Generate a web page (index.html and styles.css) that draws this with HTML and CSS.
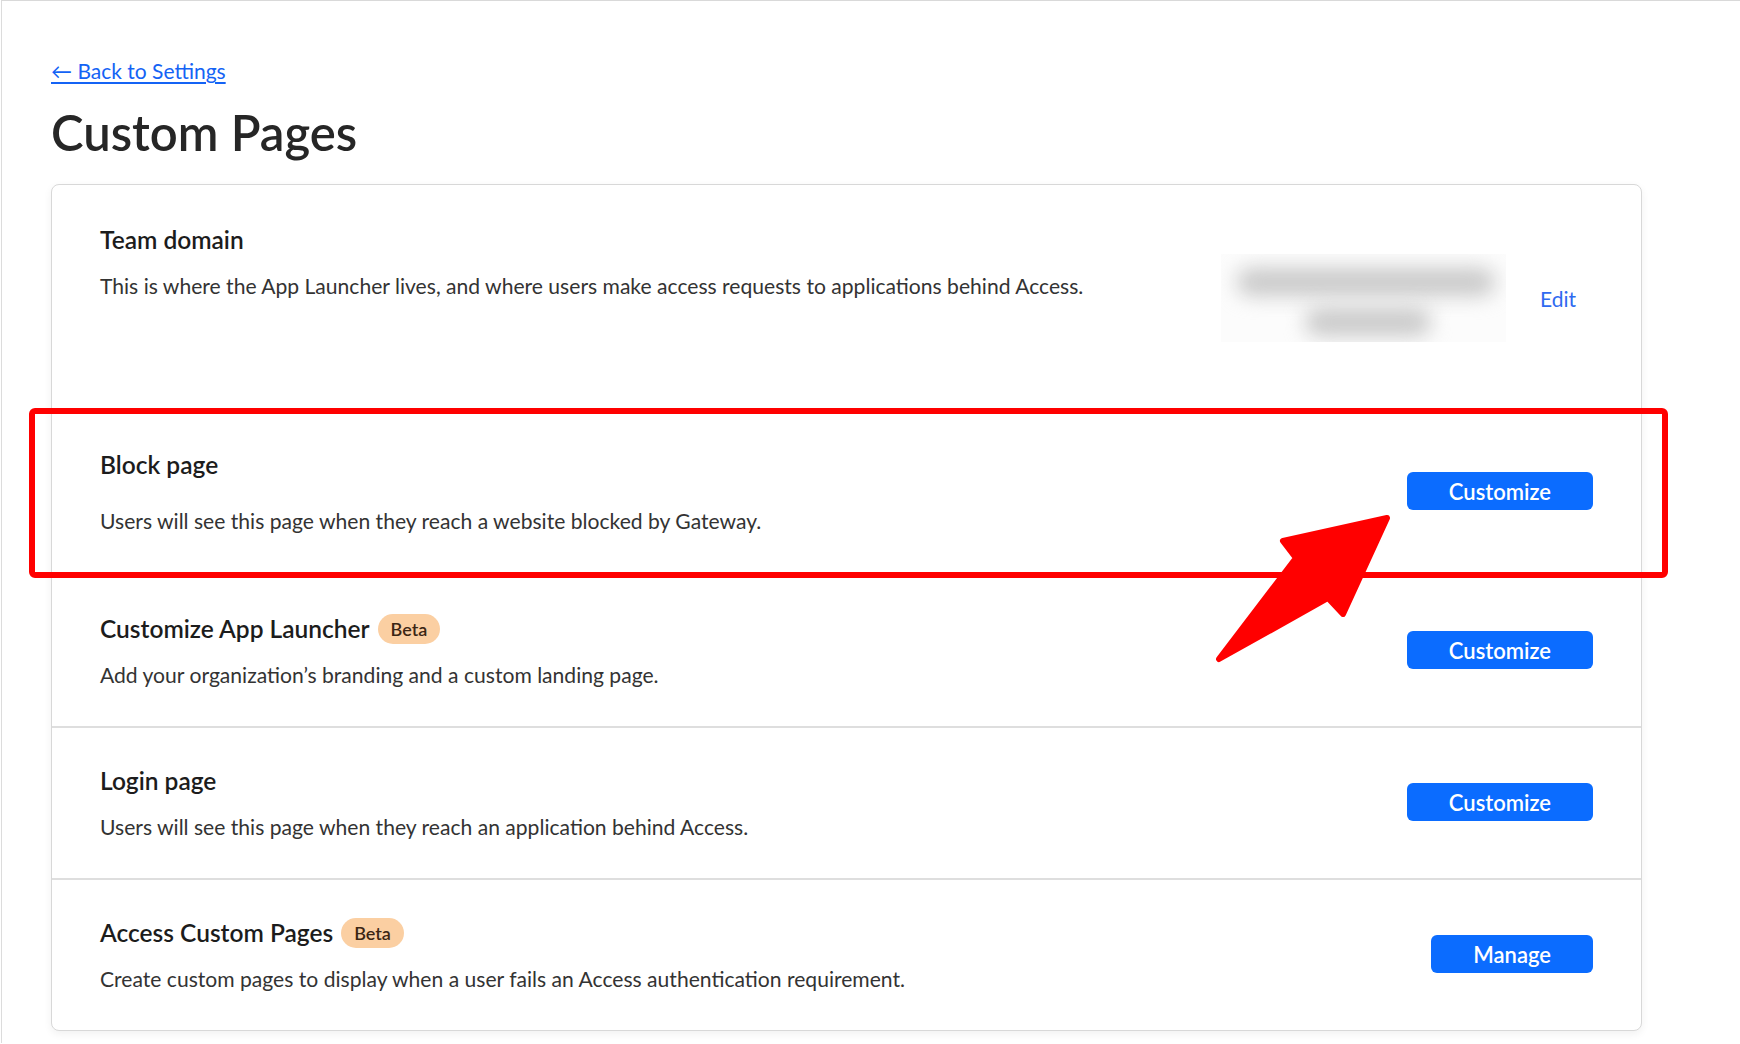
FILE: index.html
```html
<!DOCTYPE html>
<html lang="en">
<head>
  <meta charset="UTF-8">
  <meta name="viewport" content="width=device-width, initial-scale=1">
  <title>Custom Pages</title>
  <link rel="stylesheet" href="styles.css">
</head>
<body>

<div class="page">
  <a class="back" href="#">&larr; Back to Settings</a>
  <h1 class="page-title">Custom Pages</h1>

  <div class="card">
    <div class="row row-domain">
      <div class="info">
        <h2 class="row-title">Team domain</h2>
        <p class="row-desc">This is where the App Launcher lives, and where users make access requests to applications behind Access.</p>
      </div>
      <div class="domain">
        <div class="domain-blur">
          <span class="blur-line one"></span>
          <span class="blur-line two"></span>
        </div>
        <a class="edit" href="#">Edit</a>
      </div>
    </div>

    <div class="row row-block">
      <div class="info">
        <h2 class="row-title">Block page</h2>
        <p class="row-desc">Users will see this page when they reach a website blocked by Gateway.</p>
      </div>
      <button class="btn">Customize</button>
    </div>

    <div class="row">
      <div class="info">
        <h2 class="row-title">Customize App Launcher <span class="badge">Beta</span></h2>
        <p class="row-desc">Add your organization’s branding and a custom landing page.</p>
      </div>
      <button class="btn">Customize</button>
    </div>

    <div class="row">
      <div class="info">
        <h2 class="row-title">Login page</h2>
        <p class="row-desc">Users will see this page when they reach an application behind Access.</p>
      </div>
      <button class="btn">Customize</button>
    </div>

    <div class="row">
      <div class="info">
        <h2 class="row-title">Access Custom Pages <span class="badge">Beta</span></h2>
        <p class="row-desc">Create custom pages to display when a user fails an Access authentication requirement.</p>
      </div>
      <button class="btn">Manage</button>
    </div>
  </div>
</div>

<!-- screenshot annotation drawn over the page -->
<svg class="annotation" width="1740" height="1044" viewBox="0 0 1740 1044">
  <rect x="32" y="411" width="1633" height="164" rx="3" fill="none" stroke="#ff0000" stroke-width="6"/>
  <polygon points="1387,518 1343,614 1328,598 1219,659 1296,558 1283,541"
           fill="#ff0000" stroke="#ff0000" stroke-width="6" stroke-linejoin="round"/>
</svg>

</body>
</html>
```

FILE: styles.css
```css
* { box-sizing: border-box; }
html { background: #fff; }
body {
  margin: 0 0 0 1px;
  border-top: 1px solid #d9d9d9;
  border-left: 1px solid #dcdcdc;
  min-height: 1043px;
  font-family: Lato, "Open Sans", sans-serif;
  color: #222;
  overflow: hidden;
}
.page {
  padding: 56px 98px 0 49px;
}
.back {
  display: inline-block;
  font-size: 21px;
  line-height: 28px;
  color: #1463f5;
  text-decoration: underline;
  text-underline-offset: 3px;
}
.page-title {
  margin: 19px 0 24px;
  font-size: 49px;
  line-height: 56px;
  font-weight: 600;
  color: #262626;
}
.card {
  border: 1px solid #d8d8d8;
  border-radius: 8px;
  background: #fff;
  box-shadow: 0 3px 8px rgba(0, 0, 0, 0.06);
}
.row {
  display: flex;
  align-items: center;
  justify-content: space-between;
  padding: 38px 48px 36px 48px;
  border-top: 2px solid #dedede;
}
.row-domain {
  border-top: none;
  height: 226px;
  padding: 40px 48px;
}
.row-domain .info { align-self: flex-start; }
.row-block { padding: 37px 48px 38px 48px; }
.row-block .row-desc { margin-top: 26px; }
.row-title {
  margin: 0;
  display: flex;
  align-items: center;
  gap: 8px;
  font-size: 24.5px;
  line-height: 30px;
  font-weight: 600;
  color: #1c1c1c;
}
.row-desc {
  margin: 16px 0 0;
  font-size: 21.1px;
  line-height: 30px;
  color: #333;
}
.badge {
  display: inline-block;
  height: 30px;
  padding: 0 13px;
  border-radius: 15px;
  background: #fbcfa2;
  color: #3b2614;
  font-size: 18px;
  line-height: 30px;
  font-weight: 600;
}
.btn {
  height: 38px;
  margin-bottom: 4px;
  padding: 0 42px;
  border: none;
  border-radius: 6px;
  background: #0b6cff;
  color: #fff;
  font-family: inherit;
  font-size: 22px;
  font-weight: 600;
  cursor: pointer;
}
.domain {
  display: flex;
  align-items: center;
  gap: 34px;
  margin-right: 17px;
}
.domain-blur {
  position: relative;
  width: 285px;
  height: 88px;
  overflow: hidden;
  background: #fcfcfc;
}
.blur-line {
  position: absolute;
  height: 28px;
  border-radius: 14px;
  background: #c9c9c9;
  filter: blur(10px);
}
.blur-line.one { left: 16px; top: 14px; width: 258px; }
.blur-line.two { left: 84px; top: 54px; width: 126px; }
.edit {
  font-size: 21px;
  color: #2f6af0;
  text-decoration: none;
}
.annotation {
  position: absolute;
  top: 0;
  left: 0;
  pointer-events: none;
}
```
